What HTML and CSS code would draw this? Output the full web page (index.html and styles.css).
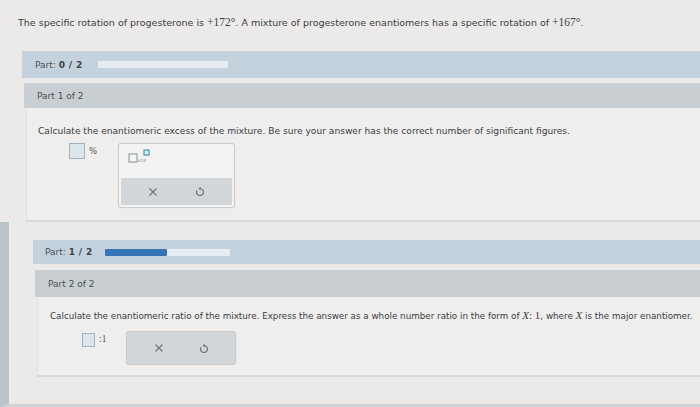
FILE: index.html
```html
<!DOCTYPE html>
<html>
<head>
<meta charset="utf-8">
<link rel="stylesheet" href="styles.css">
</head>
<body>
<div class="page">
  <p class="title">The specific rotation of progesterone is <span class="m">+172°</span>. A mixture of progesterone enantiomers has a specific rotation of <span class="m">+167°</span>.</p>

  <section class="part part-a">
    <div class="progress"><span class="plabel">Part: <b>0 / 2</b></span><span class="track"></span></div>
    <div class="phead">Part 1 of 2</div>
    <div class="content c1">
      <p class="q">Calculate the enantiomeric excess of the mixture. Be sure your answer has the correct number of significant figures.</p>
      <div class="answer">
        <div class="field"><span class="box"></span><span class="unit">%</span></div>
        <div class="tools">
          <div class="tools-top">
            <svg class="sci" width="22" height="16" viewBox="0 0 22 16">
              <rect x="1" y="5" width="8" height="8" fill="#f4f4f4" stroke="#8a8f93" stroke-width="1"/>
              <text x="9.5" y="13" font-size="4" fill="#777" font-family="DejaVu Sans">×10</text>
              <rect x="16" y="1" width="5" height="5" fill="#d8eef6" stroke="#3a9cc4" stroke-width="1.2"/>
            </svg>
          </div>
          <div class="tools-bar">
            <svg class="ic" width="10" height="10" viewBox="0 0 10 10"><path d="M1.5 1.5 L8.5 8.5 M8.5 1.5 L1.5 8.5" stroke="#6e7378" stroke-width="1.1" fill="none"/></svg>
            <svg class="ic" width="10" height="11" viewBox="0 0 10 11"><path d="M5 2.5 A3.5 3.5 0 1 1 1.9 4.3" stroke="#6e7378" stroke-width="1.2" fill="none"/><path d="M3.4 2.5 L5.6 0.8 L5.6 4.2 Z" fill="#6e7378"/></svg>
          </div>
        </div>
      </div>
    </div>
  </section>

  <section class="lower">
    <div class="part part-b">
      <div class="progress"><span class="plabel">Part: <b>1 / 2</b></span><span class="track"><span class="fill" style="width:50%"></span></span></div>
      <div class="phead">Part 2 of 2</div>
      <div class="content c2">
        <p class="q">Calculate the enantiomeric ratio of the mixture. Express the answer as a whole number ratio in the form of <span class="m"><i>X</i>: 1</span>, where <span class="m"><i>X</i></span> is the major enantiomer.</p>
        <div class="answer">
          <div class="field"><span class="box"></span><span class="unit m">:1</span></div>
          <div class="tools tools-flat">
            <div class="tools-bar">
              <svg class="ic" width="10" height="10" viewBox="0 0 10 10"><path d="M1.5 1.5 L8.5 8.5 M8.5 1.5 L1.5 8.5" stroke="#6e7378" stroke-width="1.1" fill="none"/></svg>
              <svg class="ic" width="10" height="11" viewBox="0 0 10 11"><path d="M5 2.5 A3.5 3.5 0 1 1 1.9 4.3" stroke="#6e7378" stroke-width="1.2" fill="none"/><path d="M3.4 2.5 L5.6 0.8 L5.6 4.2 Z" fill="#6e7378"/></svg>
            </div>
          </div>
        </div>
      </div>
    </div>
  </section>
</div>
</body>
</html>
```
FILE: styles.css
```css
html, body {
  margin: 0;
  padding: 0;
}
body {
  width: 700px;
  height: 407px;
  overflow: hidden;
  background: #ebeae8;
  font-family: "DejaVu Sans", Verdana, sans-serif;
  color: #3a3f43;
}
.page {
  display: flex;
  flex-direction: column;
  height: 407px;
}
.title {
  margin: 0;
  padding: 16px 0 0 18px;
  font-size: 9.5px;
  line-height: 12px;
  white-space: nowrap;
}
.m {
  font-family: "Liberation Serif", "Times New Roman", serif;
  font-size: 11.5px;
}
.part-a {
  margin: 22px 0 0 22px;
}
.progress {
  height: 27px;
  background: #c4d2de;
  display: flex;
  align-items: center;
  padding-left: 13px;
  gap: 15px;
}
.plabel {
  font-size: 9px;
  color: #4a5156;
}
.plabel b {
  font-weight: bold;
  color: #3b4248;
  letter-spacing: 0.4px;
}
.track {
  display: block;
  width: 130px;
  height: 7px;
  background: #e6ecf1;
  border-radius: 1px;
}
.fill {
  display: block;
  height: 100%;
  background: #3574b6;
  border-radius: 1px;
}
.phead {
  margin: 5px 0 0 2px;
  height: 25px;
  background: #c8ced1;
  display: flex;
  align-items: center;
  padding-left: 13px;
  font-size: 9px;
  color: #4a5156;
}
.content {
  margin-left: 4px;
  background: #efeeec;
  border-bottom: 2px solid #d9d9d7;
  border-left: 1px solid #e2e2e0;
}
.c1 {
  height: 112px;
}
.q {
  margin: 0;
  font-size: 9.1px;
  line-height: 12px;
  white-space: nowrap;
}
.c1 .q {
  padding: 17px 0 0 11px;
}
.answer {
  display: flex;
  align-items: flex-start;
}
.c1 .answer {
  padding: 6px 0 0 42px;
  gap: 21px;
}
.field {
  display: flex;
  align-items: center;
  gap: 4px;
}
.box {
  display: block;
  width: 14px;
  height: 14px;
  background: #dce6ec;
  border: 1px solid #9fb3bf;
}
.unit {
  font-size: 8.5px;
  color: #555;
}
.tools {
  width: 111px;
  border: 1px solid #c9cccd;
  border-radius: 3px;
  background: #f3f3f2;
  padding: 2px;
  box-shadow: 0 0 1px rgba(0,0,0,0.15);
}
.tools-top {
  height: 32px;
  padding: 3px 0 0 7px;
  box-sizing: border-box;
}
.sci {
  display: block;
}
.tools-bar {
  height: 27px;
  background: #d3d6d8;
  display: flex;
  align-items: center;
  justify-content: space-around;
  padding: 0 8px;
}
.lower {
  flex: 1;
  margin-top: 0;
  border-left: 9px solid #b9c5cb;
  border-bottom: 3px solid #cfd3d5;
  padding-top: 18px;
}
.part-b {
  margin-left: 24px;
}
.part-b .progress {
  height: 24px;
  padding-left: 12px;
  gap: 12px;
}
.part-b .track {
  width: 125px;
}
.part-b .phead {
  height: 27px;
  margin-top: 6px;
}
.c2 {
  height: 78px;
}
.c2 .q {
  padding: 12px 0 0 12px;
  font-size: 8.75px;
}
.c2 .q .m {
  font-size: 11px;
}
.c2 .answer {
  padding: 9px 0 0 44px;
  gap: 20px;
}
.c2 .field .box {
  width: 11px;
  height: 12px;
  margin-top: 2px;
}
.c2 .unit {
  font-size: 9.5px;
}
.tools-flat {
  width: 106px;
  padding: 1px;
  background: #d3d6d8;
}
.tools-flat .tools-bar {
  height: 30px;
}
```
